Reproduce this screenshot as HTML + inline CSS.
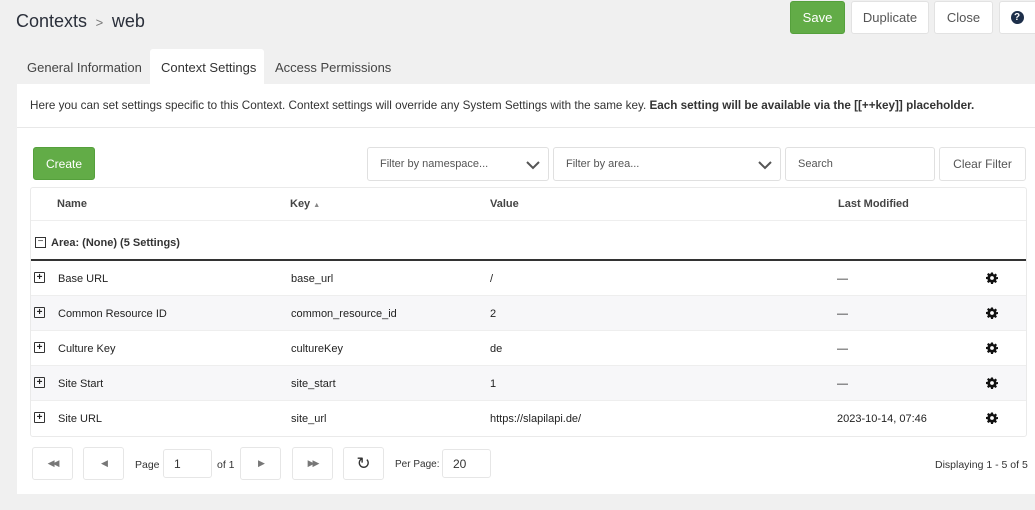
<!DOCTYPE html>
<html><head><style>
*{box-sizing:border-box;margin:0;padding:0}
body{width:1035px;height:510px;background:#f0f0f0;font-family:"Liberation Sans",sans-serif;color:#333;position:relative;overflow:hidden}
.a{position:absolute}
.btn{position:absolute;background:#fff;border:1px solid #e2e2e2;border-radius:3px;font-size:13px;color:#555;display:flex;align-items:center;justify-content:center}
.sel{position:absolute;background:#fff;border:1px solid #e0e0e0;border-radius:3px;font-size:11px;color:#555;padding-left:12px;display:flex;align-items:center}
.row{position:absolute;left:31px;width:995px;height:35px;font-size:11px;color:#222;border-bottom:1px solid #eee}
.row span{position:absolute;top:12px}
.row svg{position:absolute;left:955px;top:11px}
.pb{position:absolute;top:447px;width:41px;height:33px;border:1px solid #e6e6e6;border-radius:3px;background:#fff;display:flex;align-items:center;justify-content:center;color:#777;font-size:9px;letter-spacing:-2px}
.ex{position:absolute;left:3px;top:11px;width:11px;height:11px;border:1px solid #333;border-radius:1px;font-size:10px;line-height:9px;text-align:center;font-weight:bold}
</style></head><body>
<svg width="0" height="0" style="position:absolute"><defs><symbol id="g" viewBox="0 0 24 24"><path fill="#111" d="M10 1h4l.6 3.2 1.9.8 2.7-1.9 2.8 2.8-1.9 2.7.8 1.9L24 10v4l-3.2.6-.8 1.9 1.9 2.7-2.8 2.8-2.7-1.9-1.9.8L14 24h-4l-.6-3.2-1.9-.8-2.7 1.9-2.8-2.8 1.9-2.7-.8-1.9L0 14v-4l3.2-.6.8-1.9-1.9-2.7 2.8-2.8 2.7 1.9 1.9-.8z"/><circle cx="12" cy="12" r="3.8" fill="#fff"/></symbol></defs></svg>
<div class="a" style="left:16px;top:11px;font-size:18px;color:#2a2f3a">Contexts <span style="font-size:13px;color:#777">&nbsp;&gt;&nbsp;</span> web</div>
<div class="btn" style="left:790px;top:1px;width:55px;height:33px;background:#62ac47;border-color:#55a03c;color:#fff">Save</div>
<div class="btn" style="left:851px;top:1px;width:78px;height:33px">Duplicate</div>
<div class="btn" style="left:934px;top:1px;width:59px;height:33px">Close</div>
<div class="btn" style="left:999px;top:1px;width:40px;height:33px"><span style="display:inline-block;width:13px;height:13px;border-radius:50%;background:#1d2f4a;color:#fff;font-size:10px;font-weight:bold;text-align:center;line-height:13px;margin-left:-4px">?</span></div>
<div class="a" style="left:27px;top:60px;font-size:13px;color:#444">General Information</div>
<div class="a" style="left:150px;top:49px;width:114px;height:36px;background:#fff;border-radius:3px 3px 0 0"></div>
<div class="a" style="left:161px;top:60px;font-size:13px;color:#333">Context Settings</div>
<div class="a" style="left:275px;top:60px;font-size:13px;color:#444">Access Permissions</div>
<div class="a" style="left:17px;top:84px;width:1018px;height:410px;background:#fff"></div>
<div class="a" style="left:17px;top:127px;width:1018px;height:1px;background:#e8e8e8"></div>
<div class="a" style="left:30px;top:99px;font-size:11.7px;color:#333">Here you can set settings specific to this Context. Context settings will override any System Settings with the same key. <b>Each setting will be available via the [[++key]] placeholder.</b></div>
<div class="btn" style="left:33px;top:147px;width:62px;height:33px;background:#62ac47;border-color:#55a03c;color:#fff;font-size:12px">Create</div>
<div class="sel" style="left:367px;top:147px;width:182px;height:34px">Filter by namespace...<svg class="a" style="right:8px;top:12px" width="14" height="10"><path d="M1 2l6 6 6-6" stroke="#555" stroke-width="2" fill="none"/></svg></div>
<div class="sel" style="left:553px;top:147px;width:228px;height:34px">Filter by area...<svg class="a" style="right:8px;top:12px" width="14" height="10"><path d="M1 2l6 6 6-6" stroke="#555" stroke-width="2" fill="none"/></svg></div>
<div class="sel" style="left:785px;top:147px;width:150px;height:34px">Search</div>
<div class="btn" style="left:939px;top:147px;width:87px;height:34px;font-size:12px">Clear Filter</div>
<div class="a" style="left:30px;top:187px;width:997px;height:250px;border:1px solid #eaeaea;border-radius:3px"></div>
<div class="a" style="left:31px;top:220px;width:995px;height:1px;background:#eee"></div>
<div class="a" style="left:57px;top:198px;font-size:11px;font-weight:bold;color:#444">Name</div>
<div class="a" style="left:290px;top:198px;font-size:11px;font-weight:bold;color:#444">Key <span style="font-size:7px;color:#888">▲</span></div>
<div class="a" style="left:490px;top:198px;font-size:11px;font-weight:bold;color:#444">Value</div>
<div class="a" style="left:838px;top:198px;font-size:11px;font-weight:bold;color:#444">Last Modified</div>
<div class="a" style="left:35px;top:237px;width:11px;height:11px;border:1px solid #333;font-size:10px;line-height:8px;text-align:center">−</div>
<div class="a" style="left:51px;top:237px;font-size:11px;font-weight:bold;color:#333">Area: (None) (5 Settings)</div>
<div class="a" style="left:31px;top:259px;width:995px;height:2px;background:#333"></div>
<div class="row" style="top:261px"><div class="ex">+</div><span style="left:27px">Base URL</span><span style="left:260px">base_url</span><span style="left:459px">/</span><span style="left:806px">—</span><svg width="12" height="12"><use href="#g"/></svg></div>
<div class="row" style="top:296px;background:#f7f7f9"><div class="ex">+</div><span style="left:27px">Common Resource ID</span><span style="left:260px">common_resource_id</span><span style="left:459px">2</span><span style="left:806px">—</span><svg width="12" height="12"><use href="#g"/></svg></div>
<div class="row" style="top:331px"><div class="ex">+</div><span style="left:27px">Culture Key</span><span style="left:260px">cultureKey</span><span style="left:459px">de</span><span style="left:806px">—</span><svg width="12" height="12"><use href="#g"/></svg></div>
<div class="row" style="top:366px;background:#f7f7f9"><div class="ex">+</div><span style="left:27px">Site Start</span><span style="left:260px">site_start</span><span style="left:459px">1</span><span style="left:806px">—</span><svg width="12" height="12"><use href="#g"/></svg></div>
<div class="row" style="top:401px;border:none"><div class="ex">+</div><span style="left:27px">Site URL</span><span style="left:260px">site_url</span><span style="left:459px">https://slapilapi.de/</span><span style="left:806px">2023-10-14, 07:46</span><svg width="12" height="12"><use href="#g"/></svg></div>
<div class="pb" style="left:32px">◀◀</div>
<div class="pb" style="left:83px">◀</div>
<div class="a" style="left:135px;top:459px;font-size:10.5px">Page</div>
<div class="pb" style="left:163px;width:49px;justify-content:flex-start;padding-left:10px;color:#333;font-size:12px;top:449px;height:29px;letter-spacing:0">1</div>
<div class="a" style="left:217px;top:459px;font-size:10.5px">of 1</div>
<div class="pb" style="left:240px">▶</div>
<div class="pb" style="left:292px">▶▶</div>
<div class="pb" style="left:343px;font-size:17px;color:#333;letter-spacing:0">↻</div>
<div class="a" style="left:395px;top:459px;font-size:10px">Per Page:</div>
<div class="pb" style="left:442px;width:49px;justify-content:flex-start;padding-left:10px;color:#333;font-size:12px;top:449px;height:29px;letter-spacing:0">20</div>
<div class="a" style="left:935px;top:459px;font-size:10.5px">Displaying 1 - 5 of 5</div>
</body></html>
